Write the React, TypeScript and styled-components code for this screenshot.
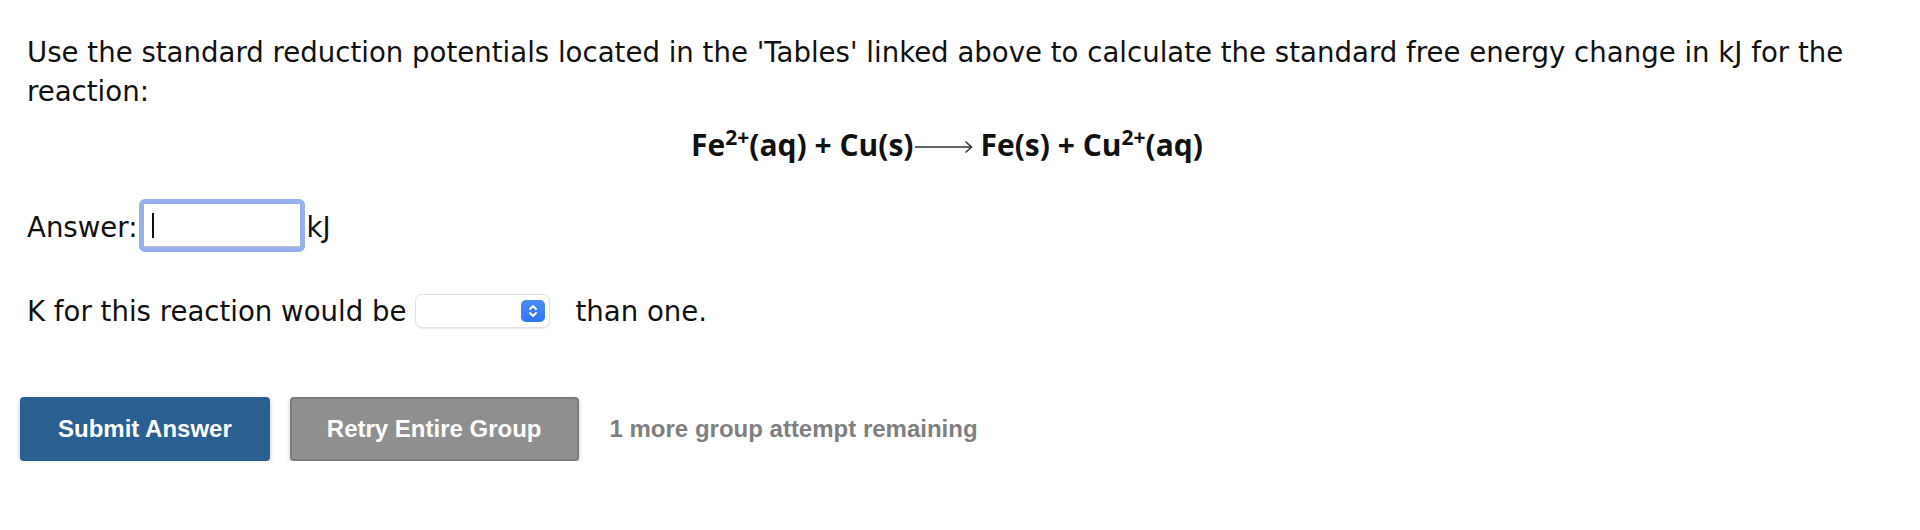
import styled, {createGlobalStyle} from "styled-components";

const GlobalStyle = createGlobalStyle`
  body {
    margin: 0;
    background: #fff;
    font-family: "DejaVu Sans", "Lucida Grande", sans-serif;
    color: #111;
  }
`

const Page = styled.div`
  padding: 33px 27px 0 27px;
`

const Question = styled.p`
  margin: 0;
  font-size: 27.6px;
  line-height: 39px;
`

const Equation = styled.div`
  text-align: center;
  font-family: "Open Sans", "DejaVu Sans", sans-serif;
  font-size: 30px;
  font-weight: bold;
  margin-top: 17px;
  line-height: 34px;
  padding-right: 26px;

  sup {
    font-size: 21px;
    line-height: 0;
  }
`

const Arrow = styled.svg`
  width: 58px;
  height: 14px;
  margin: 0 8px 0 1px;
  vertical-align: 2px;
`

const Row = styled.div`
  display: flex;
  align-items: center;
  font-size: 27.6px;
  height: ${p => p.$h}px;
  margin-top: ${p => p.$gap}px;
`

const Label = styled.span`
  margin-right: ${p => p.$space || 0}px;
  padding-top: ${p => p.$drop || 0}px;
`

const FocusRing = styled.div`
  border: 5px solid #97b1ef;
  border-radius: 6px;
  margin-right: 1px;
`

const Input = styled.div`
  width: 156px;
  height: 43px;
  background: #fff;
  border-bottom: 1px solid #bbb;
  display: flex;
  align-items: center;
  padding-left: 8px;
  box-sizing: border-box;
`

const Caret = styled.div`
  width: 2px;
  height: 25px;
  background: #111;
`

const Select = styled.div`
  width: 133px;
  height: 32px;
  box-sizing: border-box;
  border-radius: 6px;
  background: #fff;
  box-shadow: 0 0 0 1px #e2e2e2, 0 1px 2px rgba(0, 0, 0, 0.25);
  display: flex;
  justify-content: flex-end;
  align-items: center;
  padding-right: 4px;
  margin: 0 27px 0 9px;
`

const SelectButton = styled.div`
  width: 24px;
  height: 22px;
  border-radius: 5px;
  background: linear-gradient(#4a8cf8, #2f74f3);
  display: flex;
  align-items: center;
  justify-content: center;
`

const Buttons = styled.div`
  display: flex;
  align-items: center;
  gap: 20px;
  margin-top: 70px;
  margin-left: -7px;
  font-family: "Liberation Sans", Arial, sans-serif;
  font-weight: bold;
  font-size: 24px;
`

const Button = styled.div`
  height: 64px;
  box-sizing: border-box;
  padding: 0 ${p => p.$pad}px;
  display: flex;
  align-items: center;
  border-radius: 4px;
  color: #fff;
  background: ${p => p.$bg};
  border: 2px solid ${p => p.$border};
  box-shadow: 0 2px 4px rgba(0, 0, 0, 0.25);
`

const Remaining = styled.span`
  color: #7f7f7f;
  margin-left: 11px;
`

export default function App() {
    return (
        <Page>
            <GlobalStyle/>
            <Question>
                Use the standard reduction potentials located in the 'Tables' linked above to calculate the standard free energy change in kJ for the reaction:
            </Question>
            <Equation>
                Fe<sup>2+</sup>(aq) + Cu(s)
                <Arrow viewBox="0 0 58 14" fill="none" stroke="#333" strokeWidth="1.6" strokeLinecap="round">
                    <path d="M0 7 H56"/>
                    <path d="M51 2 L56.5 7 L51 12"/>
                </Arrow>
                Fe(s) + Cu<sup>2+</sup>(aq)
            </Equation>
            <Row $gap={37} $h={53}>
                <Label $space={2} $drop={4}>Answer:</Label>
                <FocusRing>
                    <Input><Caret/></Input>
                </FocusRing>
                <Label $drop={4}>kJ</Label>
            </Row>
            <Row $gap={43} $h={32}>
                <Label>K for this reaction would be</Label>
                <Select>
                    <SelectButton>
                        <svg width="12" height="16" viewBox="0 0 12 16" fill="none" stroke="#fff" strokeWidth="2" strokeLinecap="round" strokeLinejoin="round">
                            <path d="M3 6 L6 3 L9 6"/>
                            <path d="M3 10 L6 13 L9 10"/>
                        </svg>
                    </SelectButton>
                </Select>
                <Label>than one.</Label>
            </Row>
            <Buttons>
                <Button $bg="#2a6091" $border="#2a6091" $pad={36}>Submit Answer</Button>
                <Button $bg="#8f8f8f" $border="#7c7c7c" $pad={35}>Retry Entire Group</Button>
                <Remaining>1 more group attempt remaining</Remaining>
            </Buttons>
        </Page>
    )
}
